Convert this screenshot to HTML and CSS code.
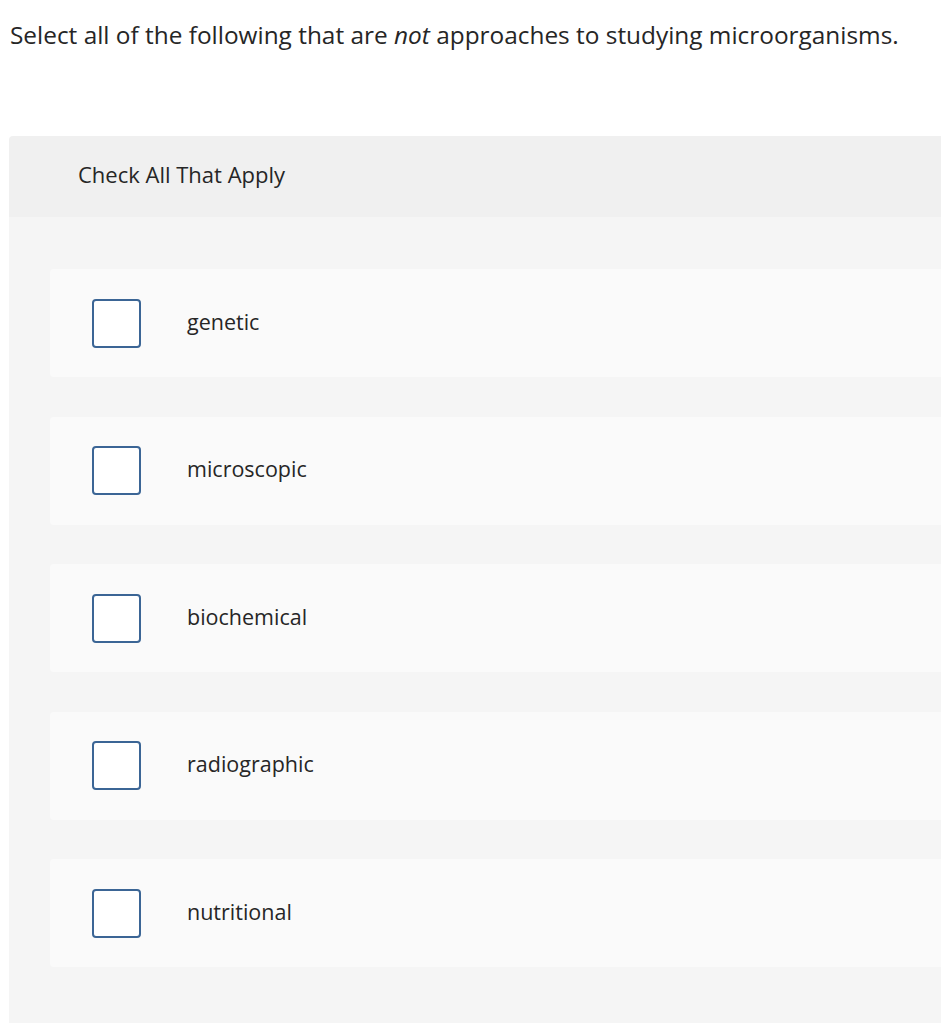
FILE: index.html
```html
<!DOCTYPE html>
<html>
<head>
<meta charset="utf-8">
<link rel="stylesheet" href="styles.css">
</head>
<body>
<div class="page">
  <p class="question">Select all of the following that are <em>not</em> approaches to studying microorganisms.</p>
  <div class="panel">
    <div class="panel-head">Check All That Apply</div>
    <div class="panel-body">
      <label class="option"><span class="box"></span><span class="label">genetic</span></label>
      <label class="option"><span class="box"></span><span class="label">microscopic</span></label>
      <label class="option"><span class="box"></span><span class="label">biochemical</span></label>
      <label class="option"><span class="box"></span><span class="label">radiographic</span></label>
      <label class="option"><span class="box"></span><span class="label">nutritional</span></label>
    </div>
  </div>
</div>
</body>
</html>
```
FILE: styles.css
```css
html, body { margin: 0; padding: 0; background: #fff; }
body { font-family: "Open Sans", "Liberation Sans", sans-serif; color: #262626; }
.page { padding: 0 0 0 9px; }
.question {
  margin: 0;
  padding: 20px 0 0 1px;
  font-size: 24.4px;
  line-height: 30px;
  height: 136px;
  box-sizing: border-box;
}
.question em { font-style: italic; }
.panel { border-radius: 4px 0 0 0; overflow: hidden; }
.panel-head {
  background: #f0f0f0;
  height: 81px;
  box-sizing: border-box;
  display: flex;
  align-items: center;
  padding: 0 0 5px 69px;
  font-size: 22px;
}
.panel-body {
  background: #f5f5f5;
  padding: 52px 0 56px 41px;
  display: flex;
  flex-direction: column;
  gap: 39.5px;
}
.option {
  background: #fafafa;
  border-radius: 4px 0 0 4px;
  height: 108px;
  display: flex;
  align-items: center;
  padding-left: 42px;
}
.box {
  width: 45px;
  height: 45px;
  border: 2px solid #3b6595;
  border-radius: 4px;
  background: #fff;
  flex: none;
}
.label { margin-left: 46px; padding-bottom: 4px; font-size: 21.5px; }
```
